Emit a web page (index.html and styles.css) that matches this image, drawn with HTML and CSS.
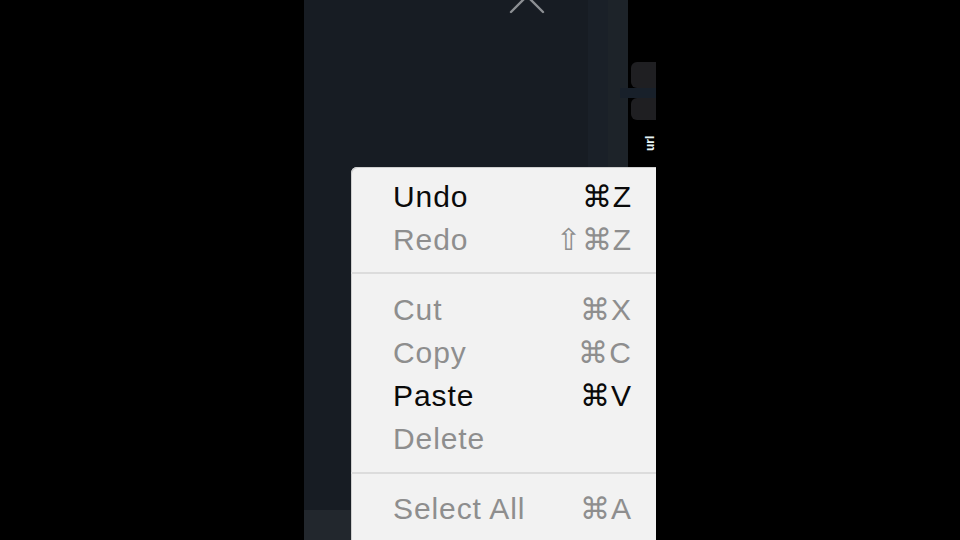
FILE: index.html
```html
<!DOCTYPE html>
<html>
<head>
<meta charset="utf-8">
<link rel="stylesheet" href="styles.css">
</head>
<body>
<div class="screen">
  <div class="gap-left"></div>
  <div class="panel">
    <div class="panel-main">
      <svg class="close" width="40" height="14" viewBox="0 0 40 14">
        <path d="M4 12 L18 -2 M22 -2 L36 12" stroke="#8c8f93" stroke-width="2.4" stroke-linecap="round" fill="none"/>
      </svg>
      <div class="panel-foot"></div>
    </div>
    <div class="strip strip-a"></div>
    <div class="strip strip-b"></div>
  </div>
  <div class="side">
    <div class="tab tab-1"></div>
    <div class="tab-link"></div>
    <div class="tab tab-2"></div>
    <div class="side-label">url</div>
  </div>

  <div class="menu">
    <div class="item on"><span class="label">Undo</span><span class="key">⌘Z</span></div>
    <div class="item"><span class="label">Redo</span><span class="key">⇧⌘Z</span></div>
    <div class="sep sep-1"></div>
    <div class="item"><span class="label">Cut</span><span class="key">⌘X</span></div>
    <div class="item"><span class="label">Copy</span><span class="key">⌘C</span></div>
    <div class="item on"><span class="label">Paste</span><span class="key">⌘V</span></div>
    <div class="item"><span class="label">Delete</span><span class="key"></span></div>
    <div class="sep sep-2"></div>
    <div class="item"><span class="label">Select All</span><span class="key">⌘A</span></div>
  </div>
</div>
</body>
</html>
```
FILE: styles.css
```css
html, body {
  margin: 0;
  padding: 0;
  background: #000;
}
.screen {
  position: relative;
  width: 960px;
  height: 540px;
  overflow: hidden;
  display: flex;
  background: #000;
}
.gap-left {
  width: 304px;
  flex: none;
}
.panel {
  width: 324px;
  flex: none;
  display: flex;
}
.panel-main {
  width: 284px;
  background: #171c23;
  display: flex;
  flex-direction: column;
  justify-content: space-between;
}
.close {
  display: block;
  margin-left: 203px;
}
.panel-foot {
  height: 30px;
  background: #22272d;
}
.strip {
  width: 20px;
}
.strip-a {
  background: #1a2028;
}
.strip-b {
  background: #1d2329;
}
.side {
  width: 28px;
  flex: none;
  padding-top: 62px;
  display: flex;
  flex-direction: column;
}
.tab {
  margin-left: 3px;
  width: 25px;
  background: #1f1f22;
  border-radius: 6px 0 0 6px;
}
.tab-1 {
  height: 26px;
}
.tab-link {
  height: 10px;
  margin-left: -8px;
  background: #18202a;
}
.tab-2 {
  height: 22px;
}
.side-label {
  margin-top: 5px;
  margin-left: 16px;
  width: 12px;
  height: 26px;
  writing-mode: vertical-rl;
  transform: rotate(180deg);
  font-family: "Liberation Sans", Arial, sans-serif;
  font-size: 12px;
  font-weight: bold;
  color: #e8f6f8;
  line-height: 12px;
}
.menu {
  position: absolute;
  left: 351px;
  top: 167px;
  width: 305px;
  height: 390px;
  background: #f2f2f2;
  border-top-left-radius: 6px;
  box-shadow: inset 1px 1px 0 #cfcfcf;
  padding-top: 8px;
  box-sizing: border-box;
  font-family: "Liberation Sans", Arial, sans-serif;
  font-size: 30px;
  letter-spacing: 0.9px;
}
.item {
  display: flex;
  justify-content: space-between;
  height: 43px;
  line-height: 43px;
  padding: 0 24px 0 42px;
  color: #8e8e8e;
}
.item.on {
  color: #0a0a0a;
}
.key {
  letter-spacing: 1px;
}
.sep {
  height: 2px;
  background: #dcdcdc;
}
.sep-1 {
  margin: 11px 0 14px;
}
.sep-2 {
  margin: 12px 0 13px;
}
```
